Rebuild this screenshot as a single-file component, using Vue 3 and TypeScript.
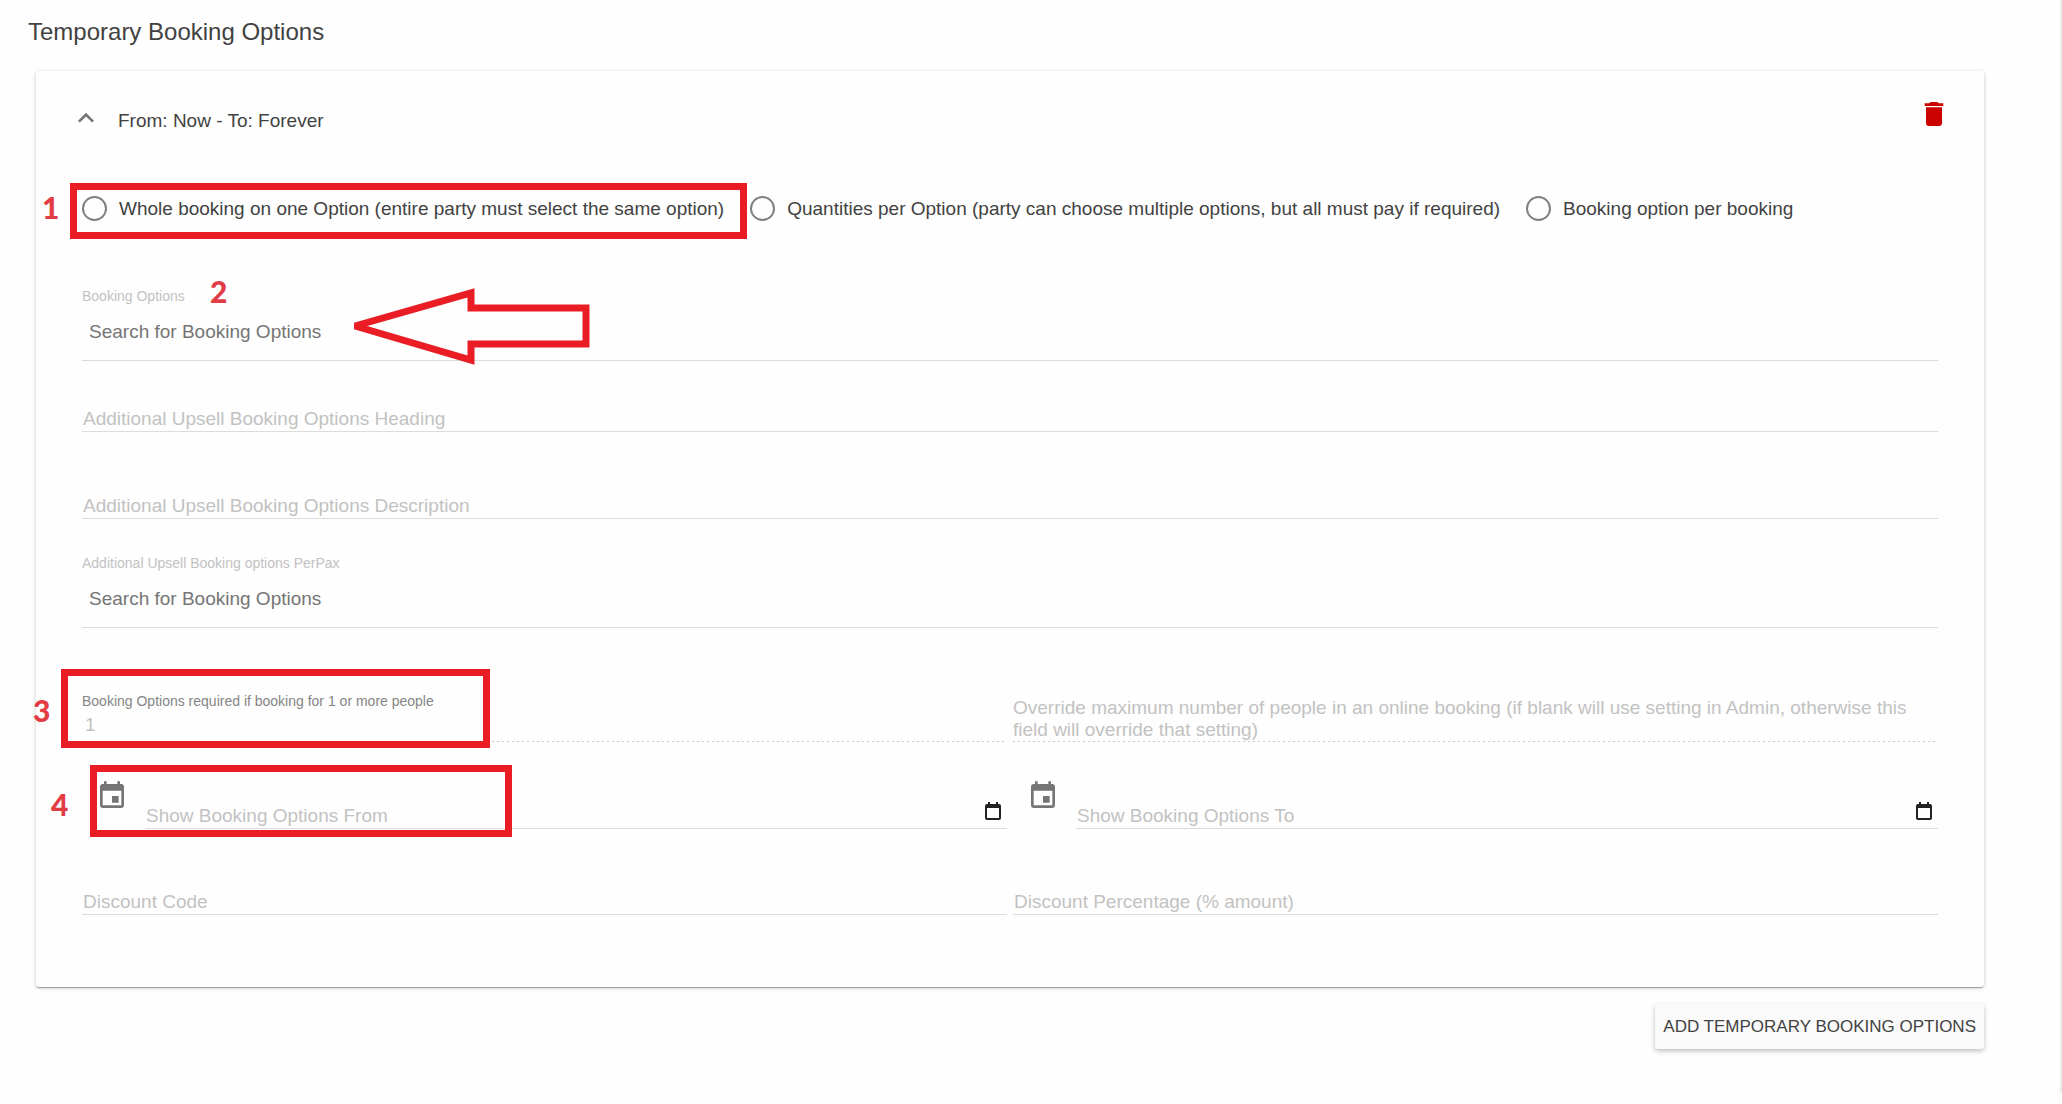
<script setup lang="ts">
import { ref } from 'vue'

interface Choice {
  value: string
  label: string
  mark?: string
}

const choices: Choice[] = [
  { value: 'whole', label: 'Whole booking on one Option (entire party must select the same option)', mark: '1' },
  { value: 'quantities', label: 'Quantities per Option (party can choose multiple options, but all must pay if required)' },
  { value: 'booking', label: 'Booking option per booking' },
]

const mode = ref('')
const open = ref(true)
const optionSearch = ref('')
const heading = ref('')
const description = ref('')
const perPaxSearch = ref('')
const maxPeople = ref('')
const showFrom = ref('')
const showTo = ref('')
const discountCode = ref('')
const discountPercentage = ref('')
</script>

<template>
  <main class="page">
    <h1 class="title">Temporary Booking Options</h1>

    <section class="card">
      <header class="card-head">
        <button class="toggle" type="button" :aria-expanded="open" @click="open = !open">
          <svg class="icon" viewBox="0 0 24 24" aria-hidden="true">
            <path d="M12 8l-6 6 1.41 1.41L12 10.83l4.59 4.58L18 14z" fill="#757575" />
          </svg>
          <span>From: Now - To: Forever</span>
        </button>
        <button class="remove" type="button" aria-label="Delete">
          <svg class="icon" viewBox="0 0 24 24" aria-hidden="true">
            <path d="M6 19c0 1.1.9 2 2 2h8c1.1 0 2-.9 2-2V7H6v12zM19 4h-3.5l-1-1h-5l-1 1H5v2h14V4z" fill="#cc0000" />
          </svg>
        </button>
      </header>

      <form v-show="open" @submit.prevent>
        <div class="choices" role="radiogroup" aria-label="Booking option mode">
          <label v-for="c in choices" :key="c.value" class="choice">
            <input v-model="mode" class="radio" type="radio" name="mode" :value="c.value" />
            <span>{{ c.label }}</span>
            <span v-if="c.mark" class="frame frame-choice"></span>
            <span v-if="c.mark" class="mark mark-choice">{{ c.mark }}</span>
          </label>
        </div>

        <div class="search search-first">
          <label class="small" for="option-search">Booking Options</label>
          <input id="option-search" v-model="optionSearch" class="search-input" type="text" placeholder="Search for Booking Options" />
          <span class="mark mark-search">2</span>
          <svg class="arrow" viewBox="0 0 240 80" aria-hidden="true">
            <path d="M4 39L120 6V21H235V57H120V73Z" fill="none" stroke="#ea1c24" stroke-width="7" stroke-linejoin="miter" stroke-miterlimit="2" />
          </svg>
        </div>

        <div class="field field-heading">
          <label for="heading">Additional Upsell Booking Options Heading</label>
          <input id="heading" v-model="heading" type="text" />
        </div>

        <div class="field field-next">
          <label for="description">Additional Upsell Booking Options Description</label>
          <input id="description" v-model="description" type="text" />
        </div>

        <div class="search search-second">
          <label class="small" for="per-pax">Additional Upsell Booking options PerPax</label>
          <input id="per-pax" v-model="perPaxSearch" class="search-input" type="text" placeholder="Search for Booking Options" />
        </div>

        <div class="pair pair-people">
          <div class="required dotted">
            <label class="small small-dark" for="required-from">Booking Options required if booking for 1 or more people</label>
            <input id="required-from" class="required-input" type="text" value="1" disabled />
            <span class="frame frame-required"></span>
            <span class="mark mark-required">3</span>
          </div>
          <div class="field field-limit dotted">
            <label for="max-people">Override maximum number of people in an online booking (if blank will use setting in Admin, otherwise this field will override that setting)</label>
            <input id="max-people" v-model="maxPeople" type="text" disabled />
          </div>
        </div>

        <div class="pair pair-dates">
          <div class="dated">
            <svg class="icon" viewBox="0 0 24 24" aria-hidden="true">
              <path d="M17 12h-5v5h5v-5zM16 1v2H8V1H6v2H5c-1.11 0-1.99.9-1.99 2L3 19c0 1.1.89 2 2 2h14c1.1 0 2-.9 2-2V5c0-1.1-.9-2-2-2h-1V1h-2zm3 18H5V8h14v11z" fill="#757575" />
            </svg>
            <div class="field">
              <label for="show-from">Show Booking Options From</label>
              <input id="show-from" v-model="showFrom" class="date" type="date" />
              <svg class="picker" viewBox="0 0 16 18" aria-hidden="true">
                <path d="M3 0h2v2h6V0h2v2h1q2 0 2 2v12q0 2-2 2H2q-2 0-2-2V4q0-2 2-2h1zM2 6v10h12V6z" fill="#222" fill-rule="evenodd" />
              </svg>
            </div>
            <span class="frame frame-date"></span>
            <span class="mark mark-date">4</span>
          </div>
          <div class="dated">
            <svg class="icon" viewBox="0 0 24 24" aria-hidden="true">
              <path d="M17 12h-5v5h5v-5zM16 1v2H8V1H6v2H5c-1.11 0-1.99.9-1.99 2L3 19c0 1.1.89 2 2 2h14c1.1 0 2-.9 2-2V5c0-1.1-.9-2-2-2h-1V1h-2zm3 18H5V8h14v11z" fill="#757575" />
            </svg>
            <div class="field">
              <label for="show-to">Show Booking Options To</label>
              <input id="show-to" v-model="showTo" class="date" type="date" />
              <svg class="picker" viewBox="0 0 16 18" aria-hidden="true">
                <path d="M3 0h2v2h6V0h2v2h1q2 0 2 2v12q0 2-2 2H2q-2 0-2-2V4q0-2 2-2h1zM2 6v10h12V6z" fill="#222" fill-rule="evenodd" />
              </svg>
            </div>
          </div>
        </div>

        <div class="pair pair-discount">
          <div class="field">
            <label for="discount-code">Discount Code</label>
            <input id="discount-code" v-model="discountCode" type="text" />
          </div>
          <div class="field">
            <label for="discount-percentage">Discount Percentage (% amount)</label>
            <input id="discount-percentage" v-model="discountPercentage" type="text" />
          </div>
        </div>
      </form>
    </section>

    <div class="actions">
      <button class="add" type="button">ADD TEMPORARY BOOKING OPTIONS</button>
    </div>
  </main>
</template>

<style>
body {
  margin: 0;
  background: #fefefe;
}
</style>

<style scoped>
.page {
  box-sizing: border-box;
  min-height: 99vh;
  padding: 18px 76px 0 28px;
  border-right: 2px solid #ececec;
  font-family: "Liberation Sans", Arial, sans-serif;
  font-size: 19px;
  line-height: 24px;
  color: #424242;
}

input,
button {
  box-sizing: border-box;
  margin: 0;
  padding: 0;
  border: 0;
  background: none;
  font: inherit;
  color: inherit;
  outline: none;
}

button {
  cursor: pointer;
}

.title {
  margin: 0 0 25px;
  font-size: 24px;
  font-weight: 400;
  line-height: 28px;
}

.card {
  margin-left: 8px;
  padding: 27px 46px 72px 46px;
  border-radius: 3px;
  background: #fefefe;
  box-shadow: 0 1px 4px rgba(0, 0, 0, 0.2), 0 1px 1px rgba(0, 0, 0, 0.14), 0 2px 1px -1px rgba(0, 0, 0, 0.2);
}

.card-head {
  display: flex;
  justify-content: space-between;
  align-items: flex-start;
  margin: 0 -12px;
}

.toggle {
  display: flex;
  align-items: flex-start;
  gap: 16px;
  padding-top: 4px;
  line-height: 38px;
}

.icon {
  display: block;
  flex: none;
  width: 32px;
  height: 32px;
}

.choices {
  display: flex;
  flex-wrap: wrap;
  gap: 26px;
  margin-top: 56px;
}

.choice {
  position: relative;
  display: flex;
  align-items: center;
  gap: 12px;
}

.radio {
  appearance: none;
  flex: none;
  width: 25px;
  height: 25px;
  border: 2px solid #808080;
  border-radius: 50%;
}

.radio:checked {
  background: radial-gradient(#757575 50%, transparent 55%);
}

.frame {
  position: absolute;
  box-sizing: border-box;
  border: 7px solid #ea1c24;
  pointer-events: none;
}

.frame-choice {
  inset: -13px -23px -18px -12px;
}

.frame-required {
  top: -24px;
  left: -21px;
  width: 429px;
  height: 79px;
}

.frame-date {
  top: -15px;
  left: 8px;
  width: 422px;
  height: 72px;
}

.mark {
  position: absolute;
  font-family: Lato, sans-serif;
  font-size: 30px;
  font-weight: 900;
  line-height: 30px;
  color: #e23c45;
}

.mark-choice {
  top: -4px;
  left: -40px;
}

.mark-search {
  top: -12px;
  left: 128px;
}

.mark-required {
  top: 2px;
  left: -49px;
}

.mark-date {
  top: 9px;
  left: -31px;
}

.search {
  position: relative;
  display: flex;
  flex-direction: column;
  border-bottom: 1px solid #dcdcdc;
}

.search-first {
  margin-top: 67px;
}

.search-second {
  margin-top: 36px;
}

.small {
  font-size: 14px;
  line-height: 16px;
  color: #c2c2c2;
}

.small-dark {
  color: #858585;
}

.search-input {
  height: 56px;
  padding-left: 7px;
}

.search-input::placeholder {
  color: #757575;
  opacity: 1;
}

.arrow {
  position: absolute;
  top: -1px;
  left: 269px;
  width: 240px;
  height: 80px;
}

.field {
  display: grid;
  align-items: end;
  border-bottom: 1px solid #dcdcdc;
}

.field > * {
  grid-area: 1 / 1;
}

.field label {
  padding-left: 1px;
  line-height: 24px;
  color: #c2c2c2;
}

.field input {
  width: 100%;
  height: 26px;
}

.field-heading {
  margin-top: 44px;
}

.field-next {
  margin-top: 60px;
}

.field-limit label {
  padding-left: 0;
  line-height: 22px;
}

.dotted {
  padding-bottom: 1px;
  border-bottom: 0;
  background: repeating-linear-gradient(to right, #c8c8c8 0 2px, transparent 2px 5px) left bottom / 100% 1px no-repeat;
}

.pair {
  display: grid;
  grid-template-columns: 1fr 1fr;
  gap: 6px;
}

.pair-people {
  margin-top: 65px;
}

.required {
  position: relative;
  display: flex;
  flex-direction: column;
}

.required-input {
  height: 32px;
  padding-left: 3px;
  color: #c2c2c2;
}

.pair-dates {
  margin-top: 38px;
}

.dated {
  position: relative;
  display: flex;
  gap: 17px;
  height: 49px;
  padding-left: 14px;
}

.dated .field {
  flex: 1;
}

.date {
  color: transparent;
}

.date::-webkit-calendar-picker-indicator {
  opacity: 0;
}

.picker {
  justify-self: end;
  width: 16px;
  height: 18px;
  margin: 0 6px 8px 0;
  pointer-events: none;
}

.pair-discount {
  margin-top: 59px;
}

.actions {
  display: flex;
  justify-content: flex-end;
  margin-top: 17px;
}

.add {
  height: 45px;
  padding: 0 8px;
  border-radius: 3px;
  background: #fafafa;
  box-shadow: 0 2px 5px rgba(0, 0, 0, 0.26);
  font-size: 17px;
}
</style>
